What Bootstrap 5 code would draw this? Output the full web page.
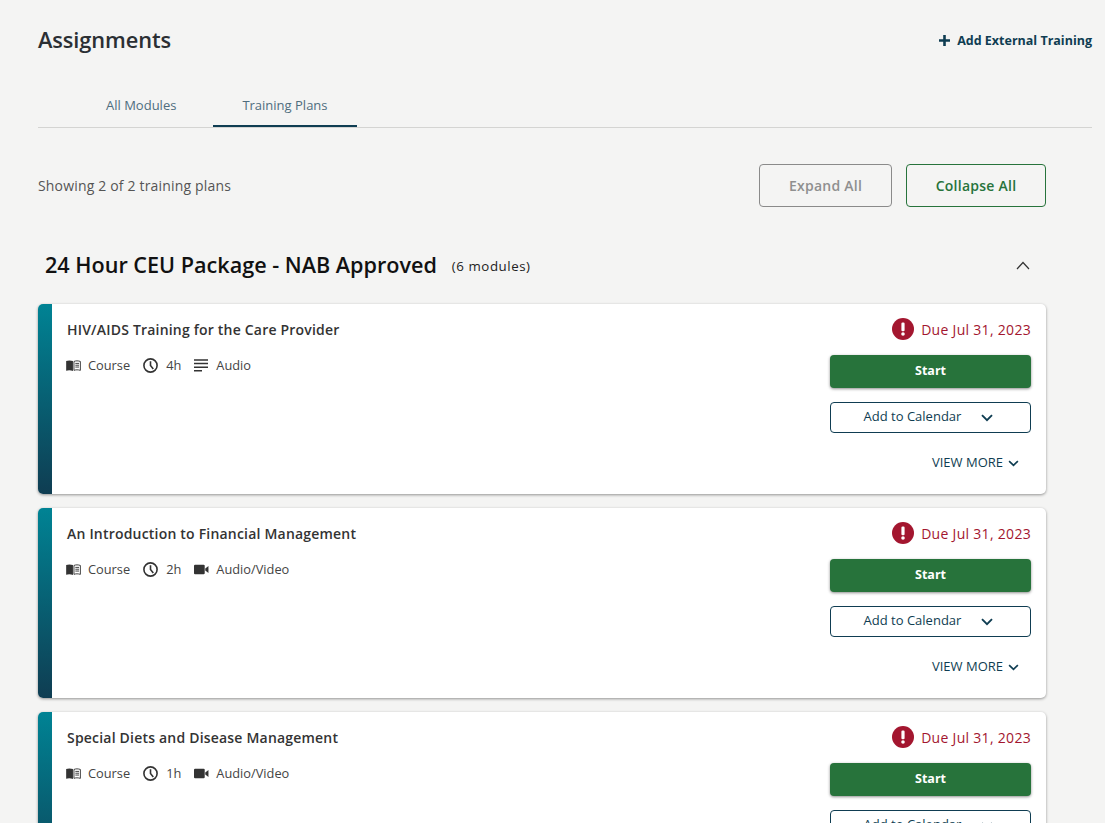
<!DOCTYPE html>
<html lang="en">
<head>
<meta charset="utf-8">
<title>Assignments</title>
<link href="https://cdn.jsdelivr.net/npm/bootstrap@5.3.0/dist/css/bootstrap.min.css" rel="stylesheet">
<style>
body{background:#f4f4f3;font-family:"Open Sans",sans-serif;color:#333;}
.pg{padding:0 13px 0 38px;height:823px;overflow:hidden;}
.top-row{height:80px;}
.pg-title{font-size:21.8px;font-weight:550;color:#2b2f33;margin:0;letter-spacing:-.1px;}
.add-ext{font-size:12.5px;font-weight:700;color:#0f3d52;text-decoration:none;margin-top:2px;}
.add-ext svg{margin:-2px 7px 0 0;}
.tabs-x{border-bottom:1px solid #d4d4d2;padding-left:39px;gap:8px;height:48px;}
.tabs-x .nav-link{font-size:13px;font-weight:500;color:#4f6d7e;padding:16px 29px 0;height:47px;border-bottom:2px solid transparent;line-height:18px;}
.tabs-x .nav-link.active{border-bottom-color:#0f3d52;}
.inner{width:1008px;}
.tool-row{margin-top:36px;height:43px;}
.showing{font-size:14px;color:#555;letter-spacing:.17px;}
.btn-x{font-size:14px;font-weight:600;height:43px;padding:0;background:transparent;letter-spacing:.25px;--bs-btn-border-radius:4px;}
.btn-exp{width:133px;border:1px solid #8a8a8a;color:#8f8f8f;}
.btn-col{width:140px;border:1px solid #27733b;color:#27733b;}
.tool-gap{gap:14px;}
.sec-row{margin-top:37px;height:40px;padding:0 16px 0 7px;}
.sec-row svg{margin-top:2px;}
.sec-title{font-size:21.6px;font-weight:550;color:#111;margin:2px 0 0;}
.sec-count{font-size:13.3px;font-weight:500;color:#222;margin-left:15px;position:relative;top:3px;letter-spacing:.55px;}
.mod-card{height:190px;margin-top:14px;border:0;border-radius:5px;box-shadow:0 1px 3px rgba(0,0,0,.4);overflow:hidden;flex-direction:row;background:#fff;}
.mod-card.first{margin-top:20px;}
.strip{width:14px;flex:none;background:linear-gradient(#008394,#0f3d52);}
.mod-body{padding:16px 15px 0 15px;}
.mod-name{font-size:14px;font-weight:600;color:#333;letter-spacing:.2px;margin:0;line-height:20px;}
.meta{font-size:12.8px;color:#444;margin-top:15px;margin-left:-1px;gap:13px;line-height:20px;}
.meta svg{display:block;margin-right:7px;}
.meta svg.ic-clock{margin-right:8px;}
.right-col{width:201px;flex:none;}
.due{font-size:14px;font-weight:500;color:#a3162f;height:20px;padding-bottom:2px;letter-spacing:.3px;}
.due svg{margin-right:7px;}
.btn-start{height:33px;margin-top:15px;background:#27733b;border:0;color:#fff;font-size:12.5px;font-weight:700;padding:0 0 1px;border-radius:4px;box-shadow:0 1px 3px rgba(0,0,0,.45);}
.btn-start:hover{background:#27733b;color:#fff;}
.btn-cal{height:31px;margin-top:14px;background:#fff;border:1px solid #0f3d52;color:#0f3d52;font-size:13px;padding:0 36px 2px 0;border-radius:4px;position:relative;}
.btn-cal svg{position:absolute;right:37px;top:11px;}
.more{font-size:13px;font-weight:500;color:#0f3d52;margin-top:20px;padding-right:12px;height:20px;gap:5px;}
</style>
</head>
<body>
<svg width="0" height="0" class="d-block position-absolute">
<defs>
<symbol id="i-book" viewBox="0 0 16 12"><path fill="#333" d="M0 1.2 C2 .2 5 .2 7.4 1.2 V12 C5 11 2 11 0 11.8Z"/><path fill="none" stroke="#333" d="M8.5 1.6 C10.5 .7 13 .7 15.5 1.6 V11.3 C13 10.5 10.5 10.5 8.5 11.3Z"/><path stroke="#333" d="M10 3.7h4M10 5.7h4M10 7.7h4"/></symbol>
<symbol id="i-clock" viewBox="0.5 0.5 15 15"><circle cx="8" cy="8" r="6.6" fill="none" stroke="#333" stroke-width="1.6"/><path d="M8 3.8V8l2.8 3.4" fill="none" stroke="#333" stroke-width="1.6"/></symbol>
<symbol id="i-lines" viewBox="0 0 15 13"><path stroke="#333" stroke-width="1.5" d="M0 1h14M0 4.6h14M0 8.2h14M0 11.8h8"/></symbol>
<symbol id="i-video" viewBox="0 0 14 10"><rect x="0" y=".5" width="10" height="9" rx="1" fill="#333"/><path fill="#333" d="M10.5 4 13.5 1.8v6.4L10.5 6Z"/></symbol>
<symbol id="i-chev" viewBox="0 0 12 8"><path d="M1 1.2 6 6.2l5-5" fill="none" stroke="#0f3d52" stroke-width="1.9"/></symbol>
<symbol id="i-alert" viewBox="0 0 22 22"><circle cx="11" cy="11" r="11" fill="#a3162f"/><rect x="9.4" y="4.5" width="3.2" height="8.8" rx="1.2" fill="#fff"/><circle cx="11" cy="16" r="1.8" fill="#fff"/></symbol>
</defs>
</svg>
<main class="pg">
  <div class="top-row d-flex justify-content-between align-items-center">
    <h1 class="pg-title">Assignments</h1>
    <a class="add-ext d-flex align-items-center" href="#"><svg width="11" height="11" viewBox="0 0 11 11"><path d="M5.5 0v11M0 5.5h11" stroke="#0f3d52" stroke-width="2.6"/></svg>Add External Training</a>
  </div>
  <ul class="nav tabs-x">
    <li class="nav-item"><a class="nav-link" href="#">All Modules</a></li>
    <li class="nav-item"><a class="nav-link active" href="#">Training Plans</a></li>
  </ul>
  <div class="inner">
    <div class="tool-row d-flex justify-content-between align-items-center">
      <span class="showing">Showing 2 of 2 training plans</span>
      <div class="d-flex tool-gap"><button class="btn btn-x btn-exp">Expand All</button><button class="btn btn-x btn-col">Collapse All</button></div>
    </div>
    <div class="sec-row d-flex justify-content-between align-items-center">
      <div class="d-flex align-items-center"><h2 class="sec-title">24 Hour CEU Package - NAB Approved</h2><span class="sec-count">(6 modules)</span></div>
      <svg width="14" height="9" viewBox="0 0 14 9"><path d="M1 8 7 1.5 13 8" fill="none" stroke="#333" stroke-width="1.2"/></svg>
    </div>

    <article class="card mod-card first">
      <div class="strip"></div>
      <div class="mod-body d-flex flex-grow-1 justify-content-between">
        <div>
          <h3 class="mod-name">HIV/AIDS Training for the Care Provider</h3>
          <div class="meta d-flex">
            <span class="d-flex align-items-center"><svg width="15" height="11"><use href="#i-book"/></svg>Course</span>
            <span class="d-flex align-items-center"><svg class="ic-clock" width="15" height="15"><use href="#i-clock"/></svg>4h</span>
            <span class="d-flex align-items-center"><svg width="15" height="13"><use href="#i-lines"/></svg>Audio</span>
          </div>
        </div>
        <div class="right-col d-flex flex-column">
          <div class="due d-flex justify-content-end align-items-center"><svg width="22" height="22"><use href="#i-alert"/></svg>Due Jul 31, 2023</div>
          <button class="btn btn-start">Start</button>
          <button class="btn btn-cal">Add to Calendar<svg width="12" height="8"><use href="#i-chev"/></svg></button>
          <div class="more d-flex justify-content-end align-items-center">VIEW MORE<svg width="11" height="7"><use href="#i-chev"/></svg></div>
        </div>
      </div>
    </article>

    <article class="card mod-card">
      <div class="strip"></div>
      <div class="mod-body d-flex flex-grow-1 justify-content-between">
        <div>
          <h3 class="mod-name">An Introduction to Financial Management</h3>
          <div class="meta d-flex">
            <span class="d-flex align-items-center"><svg width="15" height="11"><use href="#i-book"/></svg>Course</span>
            <span class="d-flex align-items-center"><svg class="ic-clock" width="15" height="15"><use href="#i-clock"/></svg>2h</span>
            <span class="d-flex align-items-center"><svg width="15" height="11"><use href="#i-video"/></svg>Audio/Video</span>
          </div>
        </div>
        <div class="right-col d-flex flex-column">
          <div class="due d-flex justify-content-end align-items-center"><svg width="22" height="22"><use href="#i-alert"/></svg>Due Jul 31, 2023</div>
          <button class="btn btn-start">Start</button>
          <button class="btn btn-cal">Add to Calendar<svg width="12" height="8"><use href="#i-chev"/></svg></button>
          <div class="more d-flex justify-content-end align-items-center">VIEW MORE<svg width="11" height="7"><use href="#i-chev"/></svg></div>
        </div>
      </div>
    </article>

    <article class="card mod-card">
      <div class="strip"></div>
      <div class="mod-body d-flex flex-grow-1 justify-content-between">
        <div>
          <h3 class="mod-name">Special Diets and Disease Management</h3>
          <div class="meta d-flex">
            <span class="d-flex align-items-center"><svg width="15" height="11"><use href="#i-book"/></svg>Course</span>
            <span class="d-flex align-items-center"><svg class="ic-clock" width="15" height="15"><use href="#i-clock"/></svg>1h</span>
            <span class="d-flex align-items-center"><svg width="15" height="11"><use href="#i-video"/></svg>Audio/Video</span>
          </div>
        </div>
        <div class="right-col d-flex flex-column">
          <div class="due d-flex justify-content-end align-items-center"><svg width="22" height="22"><use href="#i-alert"/></svg>Due Jul 31, 2023</div>
          <button class="btn btn-start">Start</button>
          <button class="btn btn-cal">Add to Calendar<svg width="12" height="8"><use href="#i-chev"/></svg></button>
          <div class="more d-flex justify-content-end align-items-center">VIEW MORE<svg width="11" height="7"><use href="#i-chev"/></svg></div>
        </div>
      </div>
    </article>
  </div>
</main>
<script src="https://cdn.jsdelivr.net/npm/bootstrap@5.3.0/dist/js/bootstrap.bundle.min.js"></script>
</body>
</html>
